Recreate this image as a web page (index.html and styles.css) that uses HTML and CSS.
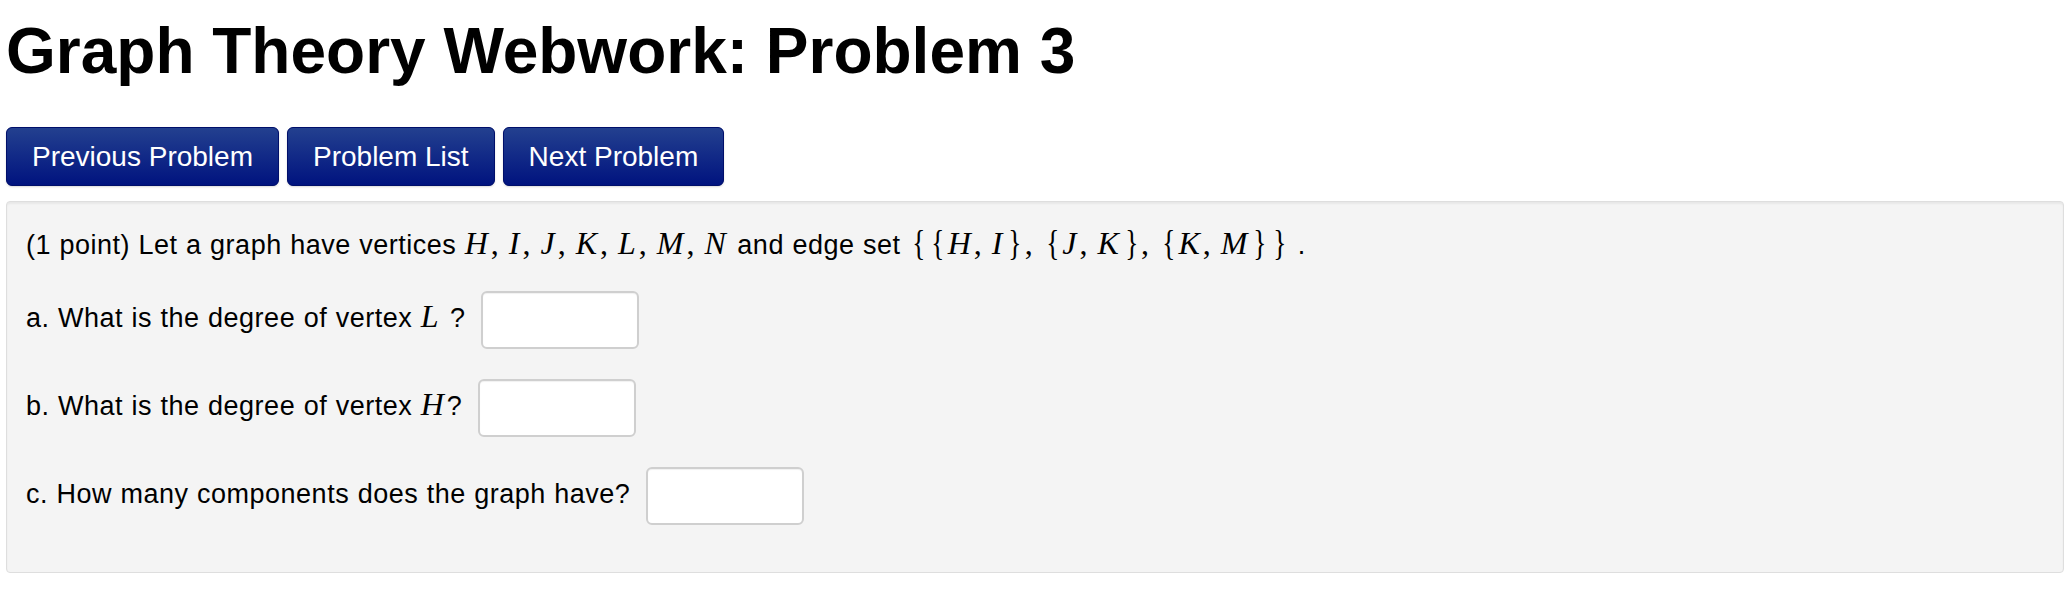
FILE: index.html
```html
<!DOCTYPE html>
<html lang="en">
<head>
    <meta charset="UTF-8">
    <meta name="viewport" content="width=device-width, initial-scale=1.0">
    <title>Graph Theory Webwork: Problem 3</title>
    <link rel="stylesheet" href="styles.css">
</head>
<body>

    <h1 class="page-title">Graph Theory Webwork: Problem 3</h1>

    <div class="nav-buttons">
        <button class="nav-btn">Previous Problem</button>
        <button class="nav-btn">Problem List</button>
        <button class="nav-btn">Next Problem</button>
    </div>

    <div class="problem">
        <div class="intro">
            (1 point) Let a graph have vertices
            <span class="math"><i>H</i><span class="sep">,</span><i>I</i><span class="sep">,</span><i>J</i><span class="sep">,</span><i>K</i><span class="sep">,</span><i>L</i><span class="sep">,</span><i>M</i><span class="sep">,</span><i>N</i></span>
            and edge set
            <span class="math"><span class="br">{</span><span class="br">{</span><i>H</i><span class="sep">,</span><i>I</i><span class="br">}</span><span class="sep">,</span><span class="br">{</span><i>J</i><span class="sep">,</span><i>K</i><span class="br">}</span><span class="sep">,</span><span class="br">{</span><i>K</i><span class="sep">,</span><i>M</i><span class="br">}</span><span class="br">}</span></span> .
        </div>

        <div class="question">
            a. What is the degree of vertex <span class="math"><i>L</i></span> ?
            <input type="text" class="answer">
        </div>

        <div class="question">
            b. What is the degree of vertex <span class="math"><i>H</i></span>?
            <input type="text" class="answer">
        </div>

        <div class="question">
            c. How many components does the graph have?
            <input type="text" class="answer">
        </div>
    </div>

</body>
</html>
```

FILE: styles.css
```css
body {
    margin: 0;
    padding: 14px 1px 0 6px;
    font-family: "Liberation Sans", Arial, sans-serif;
    color: #000;
    background-color: #fff;
}

.page-title {
    margin: 0;
    font-size: 64px;
    font-weight: bold;
    line-height: normal;
}

/* navigation buttons under the title */
.nav-buttons {
    display: flex;
    gap: 8px;
    margin-top: 39px;
}

.nav-btn {
    height: 59px;
    padding: 0 25px;
    font-family: "Liberation Sans", Arial, sans-serif;
    font-size: 28px;
    color: #fff;
    background-color: #001a88;
    background-image: linear-gradient(#23408f, #00137f);
    border: 1px solid #000f6a;
    border-radius: 6px;
    box-shadow: 0 1px 2px rgba(0, 0, 0, 0.15);
    cursor: pointer;
}

/* grey problem well */
.problem {
    margin-top: 15px;
    padding: 23px 19px 47px;
    background-color: #f4f4f4;
    border: 1px solid #dedede;
    border-radius: 4px;
    box-shadow: inset 0 2px 2px rgba(0, 0, 0, 0.05);
    font-size: 27px;
    letter-spacing: 0.5px;
    word-spacing: 0.5px;
    line-height: 36px;
}

.math {
    font-family: "Liberation Serif", "Times New Roman", serif;
    font-size: 32px;
    letter-spacing: 0;
    word-spacing: 0;
}

.math i {
    font-style: italic;
    padding-right: 3px;
}

.math .sep {
    margin-right: 10px;
}

.math .br {
    display: inline-block;
    margin: 0 2px;
    transform: scaleX(0.85) scaleY(1.1);
}

.question {
    margin-top: 30px;
}

.intro + .question {
    margin-top: 28px;
}

.answer {
    width: 158px;
    height: 58px;
    box-sizing: border-box;
    margin-left: 7px;
    vertical-align: middle;
    background-color: #fff;
    border: 2px solid #cfcfcf;
    border-radius: 6px;
    box-shadow: inset 0 1px 1px rgba(0, 0, 0, 0.06);
}
```
